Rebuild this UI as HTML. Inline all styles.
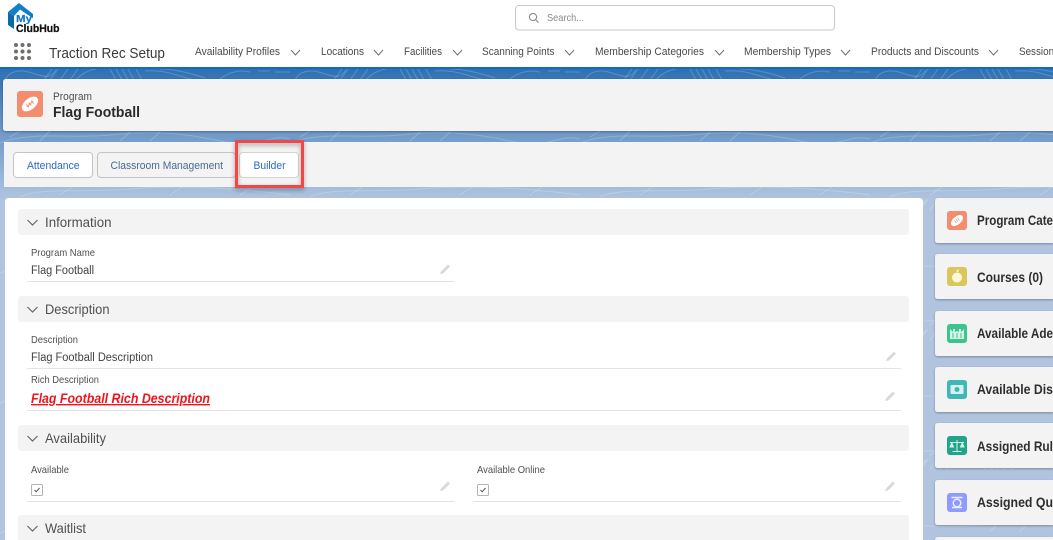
<!DOCTYPE html>
<html lang="en"><head><meta charset="utf-8"><title>Flag Football</title>
<style>
html,body{margin:0;padding:0;width:1053px;height:540px;overflow:hidden;background:#fff}
svg{display:block}
text{font-family:"Liberation Sans",sans-serif;white-space:pre}
.nav{font-size:11px;fill:#4a4a4a}
.lab{font-size:10.5px;fill:#505050}
.val{font-size:11.5px;fill:#424242}
.sec{font-size:14px;fill:#505050}
.btn{font-size:11px;fill:#2a6cc0}
.card{font-size:14px;font-weight:bold;fill:#2e2e2e}
.chev{fill:none;stroke:#706e6b;stroke-width:1}
.sc{fill:none;stroke:#666;stroke-width:1.2}
.topo{fill:none;stroke:#fff;stroke-opacity:.2;stroke-width:1}
</style></head><body>
<svg width="1053" height="540" viewBox="0 0 1053 540" xmlns="http://www.w3.org/2000/svg">
<defs>
<linearGradient id="bg" x1="0" y1="67" x2="0" y2="200" gradientUnits="userSpaceOnUse">
<stop offset="0" stop-color="#2c6fb2"/><stop offset=".5" stop-color="#7099c8"/><stop offset="1" stop-color="#b0c4df"/>
</linearGradient>
<pattern id="tp" x="0" y="67" width="290" height="130" patternUnits="userSpaceOnUse">
<g class="topo">
<path d="M5 14 C8 4 20 2 32 6 S50 12 56 3"/>
<path d="M44 13 L52 2 M50 13 L58 2 M60 13 L68 2 M70 13 L78 2 M76 13 C82 6 90 3 96 2"/>
<path d="M116 13 L110 2 M122 13 L116 2 M128 13 L122 2 M134 13 L128 2 M142 13 L136 2"/>
<path d="M145 4 C165 2 180 10 195 13 M160 2 C175 2 190 6 205 11"/>
<path d="M220 12 C230 4 240 3 250 5 M258 4 L270 4 M275 5 L290 5"/>
<path d="M0 76 C30 64 70 72 110 68 S180 65 220 74 S270 66 290 72"/>
<path d="M10 70 L20 64 M40 74 L50 64 M120 74 L130 65 M150 74 L160 65"/>
<path d="M20 130 C40 120 90 126 130 122 S230 120 290 128"/>
<path d="M60 128 L72 120 M170 128 L182 120 M240 128 L252 120"/>
</g>
</pattern>
<filter id="sh" x="-5%" y="-20%" width="110%" height="140%"><feDropShadow dx="0" dy="1" stdDeviation="1" flood-color="#000" flood-opacity=".3"/></filter>
<filter id="rs" x="-20%" y="-20%" width="140%" height="150%"><feDropShadow dx="0" dy="2" stdDeviation="2.500" flood-color="#000" flood-opacity=".35"/></filter>
<g id="pen"><path d="M0 10 L1 7.500 L8 .5 L10 2.500 L3 9.500 Z" fill="#d8d8d8"/></g>
<g id="cb"><rect x=".5" y=".5" width="11" height="11" rx="1" fill="#fff" stroke="#b5b5b5"/><path d="M3.500 6 L5.200 7.800 L8.500 4" fill="none" stroke="#555" stroke-width="1"/></g>
</defs>

<rect x="0" y="0" width="1053" height="67" fill="#fff"/>
<rect x="0" y="67" width="1053" height="473" fill="url(#bg)"/>
<rect x="0" y="67" width="1053" height="473" fill="url(#tp)"/>
<rect x="0" y="67" width="1053" height="2" fill="#0f6cc4"/>

<!-- logo -->
<path d="M8 12 L19 3 L33 14 L33 18 L31 17 L20 9.500 L14 16 Z" fill="#0f7fc8"/>
<path d="M8 12 L14 16 L14 29 L8 25 Z" fill="#0b6aa8"/>
<text x="16" y="22" font-size="10" font-weight="bold" fill="#1479c4" stroke="#1479c4" stroke-width=".2" textLength="16" lengthAdjust="spacingAndGlyphs">My</text>
<text x="16" y="32" font-size="11" font-weight="bold" fill="#111" stroke="#111" stroke-width=".25" textLength="43.500" lengthAdjust="spacingAndGlyphs">ClubHub</text>

<!-- app launcher -->
<g fill="#706e6b">
<circle cx="16" cy="45" r="2"/><circle cx="22.500" cy="45" r="2"/><circle cx="29" cy="45" r="2"/>
<circle cx="16" cy="51.500" r="2"/><circle cx="22.500" cy="51.500" r="2"/><circle cx="29" cy="51.500" r="2"/>
<circle cx="16" cy="58" r="2"/><circle cx="22.500" cy="58" r="2"/><circle cx="29" cy="58" r="2"/>
</g>
<text x="49" y="58" font-size="15" fill="#3a3a3a" textLength="116" lengthAdjust="spacingAndGlyphs">Traction Rec Setup</text>

<!-- search -->
<rect x="515.500" y="5.500" width="319" height="24.500" rx="3.500" fill="#fff" stroke="#c9c9c9"/>
<circle cx="533" cy="17" r="3.600" fill="none" stroke="#8a8a8a" stroke-width="1.100"/>
<path d="M535.700 19.800 L538.500 22.800" stroke="#8a8a8a" stroke-width="1.100"/>
<text x="547" y="21" font-size="10.500" fill="#8a8a8a" textLength="37" lengthAdjust="spacingAndGlyphs">Search...</text>

<!-- nav -->
<text class="nav" x="195" y="55" textLength="85" lengthAdjust="spacingAndGlyphs">Availability Profiles</text>
<path class="chev" d="M291 50 L295.500 55 L300 50"/>
<text class="nav" x="321" y="55" textLength="43" lengthAdjust="spacingAndGlyphs">Locations</text>
<path class="chev" d="M374 50 L378.500 55 L383 50"/>
<text class="nav" x="404" y="55" textLength="38" lengthAdjust="spacingAndGlyphs">Facilities</text>
<path class="chev" d="M453 50 L457.500 55 L462 50"/>
<text class="nav" x="482" y="55" textLength="72.500" lengthAdjust="spacingAndGlyphs">Scanning Points</text>
<path class="chev" d="M565 50 L569.500 55 L574 50"/>
<text class="nav" x="595" y="55" textLength="109" lengthAdjust="spacingAndGlyphs">Membership Categories</text>
<path class="chev" d="M715 50 L719.500 55 L724 50"/>
<text class="nav" x="744" y="55" textLength="87" lengthAdjust="spacingAndGlyphs">Membership Types</text>
<path class="chev" d="M841 50 L845.500 55 L850 50"/>
<text class="nav" x="871" y="55" textLength="108" lengthAdjust="spacingAndGlyphs">Products and Discounts</text>
<path class="chev" d="M989 50 L993.500 55 L998 50"/>
<text class="nav" x="1019" y="55" textLength="40" lengthAdjust="spacingAndGlyphs">Sessions</text>

<!-- record header -->
<path d="M6 79 H1053 V131 H6 Q3 131 3 128 V82 Q3 79 6 79 Z" fill="#f3f3f3" filter="url(#sh)"/>
<rect x="17" y="91" width="26" height="26" rx="3" fill="#f28d70"/>
<g transform="translate(30 104) rotate(-40)">
<ellipse cx="0" cy="0" rx="9.500" ry="5.500" fill="#fff"/>
<path d="M-3 -2 V2 M0 -2 V2 M3 -2 V2 M-4 0 H4" stroke="#f28d70" stroke-width="1"/>
</g>
<text x="53" y="100" font-size="11" fill="#505050" textLength="39" lengthAdjust="spacingAndGlyphs">Program</text>
<text x="53" y="117" font-size="15" font-weight="bold" fill="#2a2a2a" textLength="87" lengthAdjust="spacingAndGlyphs">Flag Football</text>

<!-- tabs -->
<rect x="4" y="142" width="1049" height="45" fill="#f3f3f3"/>
<rect x="13.500" y="152.500" width="79" height="25" rx="3.500" fill="#fff" stroke="#c4c4c4"/>
<text class="btn" x="27" y="169" textLength="52.500" lengthAdjust="spacingAndGlyphs">Attendance</text>
<rect x="97.500" y="152.500" width="138" height="25" rx="3.500" fill="#f3f3f3" stroke="#c4c4c4"/>
<text class="btn" x="110.500" y="169" textLength="112.500" lengthAdjust="spacingAndGlyphs" style="fill:#476a94">Classroom Management</text>
<rect x="239.500" y="152.500" width="59" height="25" rx="3.500" fill="#fff" stroke="#d4d4d4"/>
<text class="btn" x="253.500" y="169" textLength="32" lengthAdjust="spacingAndGlyphs">Builder</text>
<rect x="236.500" y="141.500" width="66" height="45" fill="none" stroke="#f2464a" stroke-width="3" filter="url(#rs)"/>

<!-- main card -->
<path d="M9 198 H919 Q923 198 923 202 V540 H5 V202 Q5 198 9 198 Z" fill="#fff"/>

<!-- Information -->
<rect x="18" y="209" width="891" height="26" rx="3" fill="#f3f3f3"/>
<path class="sc" d="M27.500 220 L32.500 225 L37.500 220"/>
<text class="sec" x="45" y="227" textLength="66.500" lengthAdjust="spacingAndGlyphs">Information</text>
<text class="lab" x="31" y="256" textLength="64" lengthAdjust="spacingAndGlyphs">Program Name</text>
<text class="val" x="31" y="274" textLength="63" lengthAdjust="spacingAndGlyphs">Flag Football</text>
<rect x="27" y="281" width="427" height="1" fill="#e3e3e3"/>
<use href="#pen" x="440" y="264"/>

<!-- Description -->
<rect x="18" y="296" width="891" height="26" rx="3" fill="#f3f3f3"/>
<path class="sc" d="M27.500 307 L32.500 312 L37.500 307"/>
<text class="sec" x="45" y="314" textLength="64.500" lengthAdjust="spacingAndGlyphs">Description</text>
<text class="lab" x="31" y="343" textLength="47" lengthAdjust="spacingAndGlyphs">Description</text>
<text class="val" x="31" y="361" textLength="122" lengthAdjust="spacingAndGlyphs">Flag Football Description</text>
<rect x="27" y="368" width="874" height="1" fill="#e3e3e3"/>
<use href="#pen" x="886" y="351"/>
<text class="lab" x="31" y="383" textLength="68" lengthAdjust="spacingAndGlyphs">Rich Description</text>
<text x="31" y="403" font-size="14" font-weight="bold" font-style="italic" fill="#f0141e" text-decoration="underline" textLength="179" lengthAdjust="spacingAndGlyphs">Flag Football Rich Description</text>
<rect x="27" y="410" width="874" height="1" fill="#e3e3e3"/>
<use href="#pen" x="885" y="391"/>

<!-- Availability -->
<rect x="18" y="425" width="891" height="26" rx="3" fill="#f3f3f3"/>
<path class="sc" d="M27.500 436 L32.500 441 L37.500 436"/>
<text class="sec" x="45" y="443" textLength="61" lengthAdjust="spacingAndGlyphs">Availability</text>
<text class="lab" x="31" y="473" textLength="38" lengthAdjust="spacingAndGlyphs">Available</text>
<use href="#cb" x="31" y="484"/>
<rect x="27" y="501" width="427" height="1" fill="#e3e3e3"/>
<use href="#pen" x="440" y="481"/>
<text class="lab" x="477" y="473" textLength="68" lengthAdjust="spacingAndGlyphs">Available Online</text>
<use href="#cb" x="477" y="484"/>
<rect x="473" y="501" width="428" height="1" fill="#e3e3e3"/>
<use href="#pen" x="885" y="481"/>

<!-- Waitlist -->
<path d="M21 515 H906 Q909 515 909 518 V540 H18 V518 Q18 515 21 515 Z" fill="#f3f3f3"/>
<path class="sc" d="M27.500 526 L32.500 531 L37.500 526"/>
<text class="sec" x="45" y="533" textLength="41" lengthAdjust="spacingAndGlyphs">Waitlist</text>

<!-- right cards -->
<g filter="url(#sh)" fill="#f3f3f3">
<path d="M938 198 H1053 V243 H938 Q935 243 935 240 V201 Q935 198 938 198 Z"/>
<path d="M938 254 H1053 V299 H938 Q935 299 935 296 V257 Q935 254 938 254 Z"/>
<path d="M938 311 H1053 V356 H938 Q935 356 935 353 V314 Q935 311 938 311 Z"/>
<path d="M938 367 H1053 V412 H938 Q935 412 935 409 V370 Q935 367 938 367 Z"/>
<path d="M938 423 H1053 V468 H938 Q935 468 935 465 V426 Q935 423 938 423 Z"/>
<path d="M938 480 H1053 V525 H938 Q935 525 935 522 V483 Q935 480 938 480 Z"/>
<path d="M938 537 H1053 V540 H935 Q935 537 938 537 Z"/>
</g>

<rect x="947" y="211" width="20" height="19" rx="3" fill="#f28d70"/>
<g transform="translate(957 220.500) rotate(-40)"><ellipse rx="7" ry="4" fill="#fff"/><path d="M-2 -1.500 V1.500 M0 -1.500 V1.500 M2 -1.500 V1.500" stroke="#f28d70" stroke-width=".8"/></g>
<text class="card" x="977" y="225" textLength="76" lengthAdjust="spacingAndGlyphs">Program Cate</text>

<rect x="947" y="267" width="20" height="19" rx="3" fill="#d9c65c"/>
<circle cx="957" cy="277.500" r="5" fill="#fff8d8"/><path d="M957 272 L958.500 269.500" stroke="#fff" stroke-width="1.200"/>
<text class="card" x="977" y="282" textLength="66" lengthAdjust="spacingAndGlyphs">Courses (0)</text>

<rect x="947" y="324" width="20" height="19" rx="3" fill="#3cc48f"/>
<path d="M950 339 V329 L953 332 V329 H955 V332 L957 331 L959 332 V329 H961 V332 L964 329 V339 Z" fill="#d5f3e6"/>
<path d="M953 333 V338 M957 333 V338 M961 333 V338" stroke="#3cc48f" stroke-width="1"/>
<text class="card" x="977" y="338" textLength="76" lengthAdjust="spacingAndGlyphs">Available Ade</text>

<rect x="947" y="380" width="20" height="19" rx="3" fill="#3fb8b5"/>
<rect x="950.500" y="385" width="13" height="9" rx="1" fill="#d6f1f0"/>
<circle cx="957" cy="389.500" r="2.500" fill="#3fb8b5"/>
<text class="card" x="977" y="394" textLength="76" lengthAdjust="spacingAndGlyphs">Available Dis</text>

<rect x="947" y="436" width="20" height="19" rx="3" fill="#21a58a"/>
<path d="M957 440 V451 M952.500 451.500 H961.500 M950 442.500 H964 M950 447 L951.700 443 L953.500 447 Z M960.500 447 L962.300 443 L964 447 Z" stroke="#d7f0ea" stroke-width="1" fill="#d7f0ea"/>
<text class="card" x="977" y="451" textLength="76" lengthAdjust="spacingAndGlyphs">Assigned Rul</text>

<rect x="947" y="493" width="20" height="19" rx="3" fill="#8f9bff"/>
<path d="M951.500 497.500 H962.500 M952 507.500 H962" stroke="#f0f1ff" stroke-width="1.400"/>
<circle cx="957" cy="503" r="3.800" fill="none" stroke="#f0f1ff" stroke-width="1.400"/>
<text class="card" x="977" y="507" textLength="76" lengthAdjust="spacingAndGlyphs">Assigned Qu</text>
</svg>
</body></html>
